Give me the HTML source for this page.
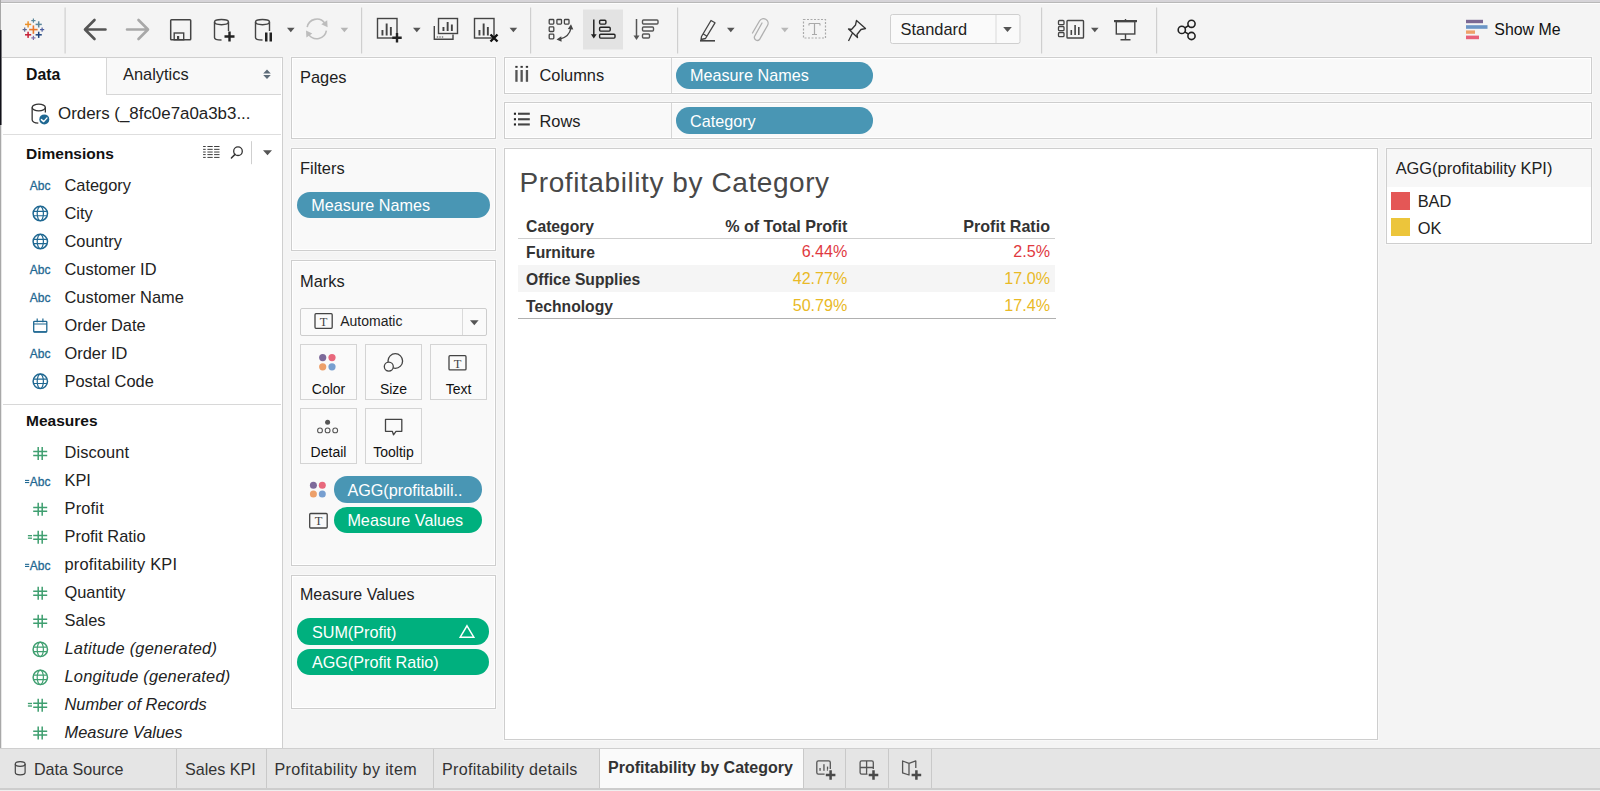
<!DOCTYPE html><html><head><meta charset="utf-8"><style>
html,body{margin:0;padding:0;width:1600px;height:791px;overflow:hidden;background:#f4f4f4;position:relative;font-family:"Liberation Sans",sans-serif}
.t{position:absolute;line-height:1;white-space:nowrap}
.r{position:absolute;display:block}
</style></head><body>
<div class="r" style="left:0px;top:0px;width:1600px;height:2px;background:#d6d4d8"></div>
<div class="r" style="left:0px;top:2px;width:1600px;height:1px;background:#b8b8b8"></div>
<div class="r" style="left:0px;top:3px;width:1600px;height:1px;background:#fdfdfd"></div>
<div class="r" style="left:0px;top:4px;width:1600px;height:53px;background:#f4f4f4"></div>
<div class="r" style="left:0px;top:0px;width:1px;height:791px;background:#a8a8a8"></div>
<div class="r" style="left:1px;top:57px;width:1px;height:691px;background:#e8e8e8"></div>
<div class="r" style="left:0px;top:30px;width:1px;height:95px;background:#101018"></div>
<div class="r" style="left:1px;top:30px;width:1px;height:95px;background:#7a7a7e"></div>
<svg class="r" style="left:0px;top:0px;" width="1600" height="57" viewBox="0 0 1600 57"><rect x="29.2" y="28.8" width="8.4" height="1.6" fill="#e8762b"/><rect x="32.6" y="25.400000000000002" width="1.6" height="8.4" fill="#e8762b"/><rect x="25.0" y="23.65" width="6.2" height="1.5" fill="#eb912b"/><rect x="27.35" y="21.299999999999997" width="1.5" height="6.2" fill="#eb912b"/><rect x="35.6" y="23.65" width="6.2" height="1.5" fill="#5b879b"/><rect x="37.95" y="21.299999999999997" width="1.5" height="6.2" fill="#5b879b"/><rect x="25.0" y="34.05" width="6.2" height="1.5" fill="#c72035"/><rect x="27.35" y="31.699999999999996" width="1.5" height="6.2" fill="#c72035"/><rect x="35.6" y="34.05" width="6.2" height="1.5" fill="#1f447e"/><rect x="37.95" y="31.699999999999996" width="1.5" height="6.2" fill="#1f447e"/><rect x="31.299999999999997" y="20.0" width="4.2" height="1.2" fill="#5b879b"/><rect x="32.8" y="18.5" width="1.2" height="4.2" fill="#5b879b"/><rect x="22.599999999999998" y="29.0" width="4.2" height="1.2" fill="#5c6692"/><rect x="24.099999999999998" y="27.5" width="1.2" height="4.2" fill="#5c6692"/><rect x="40.0" y="29.0" width="4.2" height="1.2" fill="#4e5fa0"/><rect x="41.5" y="27.5" width="1.2" height="4.2" fill="#4e5fa0"/><rect x="31.299999999999997" y="37.3" width="4.2" height="1.2" fill="#7f6fa9"/><rect x="32.8" y="35.8" width="1.2" height="4.2" fill="#7f6fa9"/><rect x="64.5" y="7.5" width="1.2" height="46" fill="#cfcfcf"/><rect x="361.0" y="7.5" width="1.2" height="46" fill="#cfcfcf"/><rect x="530.0" y="7.5" width="1.2" height="46" fill="#cfcfcf"/><rect x="677.0" y="7.5" width="1.2" height="46" fill="#cfcfcf"/><rect x="1041.0" y="7.5" width="1.2" height="46" fill="#cfcfcf"/><rect x="1156.0" y="7.5" width="1.2" height="46" fill="#cfcfcf"/><path d="M105.5 29.5H85.5M94.5 20L85 29.5L94.5 39" fill="none" stroke="#555" stroke-width="2.6" stroke-linecap="round" stroke-linejoin="round"/><path d="M127 29.5H147.5M138.5 20L148 29.5L138.5 39" fill="none" stroke="#a8a8a8" stroke-width="2.6" stroke-linecap="round" stroke-linejoin="round"/><rect x="170.7" y="19.7" width="20" height="20" rx="0.8" fill="none" stroke="#444" stroke-width="1.5"/><rect x="174.2" y="33" width="9.5" height="6.8" fill="none" stroke="#444" stroke-width="1.4"/><rect x="177" y="36" width="2.2" height="3" fill="#444"/><ellipse cx="221.5" cy="22.1" rx="7.0" ry="2.6" fill="none" stroke="#444" stroke-width="1.4"/><path d="M214.5 22.1V37.4A7.0 2.6 0 0 0 221.5 40.0" fill="none" stroke="#444" stroke-width="1.4"/><path d="M228.5 22.1V31.0" fill="none" stroke="#444" stroke-width="1.4"/><path d="M229.5 31.5V41.5M224.5 36.5H234.5" stroke="#222" stroke-width="2.4"/><ellipse cx="262.5" cy="22.1" rx="7.0" ry="2.6" fill="none" stroke="#444" stroke-width="1.4"/><path d="M255.5 22.1V37.4A7.0 2.6 0 0 0 262.5 40.0" fill="none" stroke="#444" stroke-width="1.4"/><path d="M269.5 22.1V31.0" fill="none" stroke="#444" stroke-width="1.4"/><rect x="265" y="32.5" width="2.5" height="9" fill="#222"/><rect x="269.5" y="32.5" width="2.5" height="9" fill="#222"/><path d="M287 27.8H294.6L290.8 32.2Z" fill="#555"/><path d="M340.6 27.8H348.20000000000005L344.40000000000003 32.2Z" fill="#b5b5b5"/><path d="M307.2 27.2A9.8 9.8 0 0 1 324.8 23.2M326.4 30.6A9.8 9.8 0 0 1 308.8 34.6" fill="none" stroke="#bdbdbd" stroke-width="1.6"/><path d="M321.3 24.2L327.6 27.2L327.2 20.2Z M312.3 33.6L306 30.6L306.4 37.6Z" fill="#bdbdbd"/><rect x="377.5" y="18.5" width="19.5" height="19.5" fill="none" stroke="#444" stroke-width="1.4"/><rect x="381.5" y="30.0" width="1.9" height="5.5" fill="#444"/><rect x="385.7" y="23.5" width="1.9" height="12" fill="#444"/><rect x="389.9" y="27.0" width="1.9" height="8.5" fill="#444"/><path d="M397 33V42.5M392.3 37.7H401.7" stroke="#222" stroke-width="2.4"/><path d="M413 27.8H420.6L416.8 32.2Z" fill="#555"/><rect x="438.5" y="18.5" width="19" height="15" fill="none" stroke="#444" stroke-width="1.4"/><rect x="442.5" y="27" width="1.9" height="4" fill="#444"/><rect x="446.7" y="22" width="1.9" height="9" fill="#444"/><rect x="450.9" y="24.5" width="1.9" height="6.5" fill="#444"/><path d="M434.3 26V39.3H453V34.5" fill="none" stroke="#444" stroke-width="1.4"/><path d="M437.5 36.5V37.5M440 36.5V37.5M442.5 36.5V37.5" stroke="#444" stroke-width="1.4"/><rect x="474.5" y="18.5" width="19.5" height="19.5" fill="none" stroke="#444" stroke-width="1.4"/><rect x="478.5" y="30.0" width="1.9" height="5.5" fill="#444"/><rect x="482.7" y="23.5" width="1.9" height="12" fill="#444"/><rect x="486.9" y="27.0" width="1.9" height="8.5" fill="#444"/><path d="M490.5 34.5L497.5 41.5M497.5 34.5L490.5 41.5" stroke="#111" stroke-width="2.4"/><path d="M509.6 27.8H517.2L513.4 32.2Z" fill="#555"/><rect x="549.2" y="19.5" width="4.6" height="4.6" rx="0.8" fill="none" stroke="#444" stroke-width="1.3"/><rect x="556.9" y="19.5" width="4.6" height="4.6" rx="0.8" fill="none" stroke="#444" stroke-width="1.3"/><rect x="564.4" y="19.5" width="4.6" height="4.6" rx="0.8" fill="none" stroke="#444" stroke-width="1.3"/><rect x="549.2" y="26.9" width="4.6" height="4.6" rx="0.8" fill="none" stroke="#444" stroke-width="1.3"/><rect x="549.2" y="34.2" width="4.6" height="4.6" rx="0.8" fill="none" stroke="#444" stroke-width="1.3"/><path d="M570.8 28.5Q569.5 36.5 559.8 39.2" fill="none" stroke="#444" stroke-width="1.4"/><path d="M567.8 29L571 24.2L573.3 29.5Z M561.3 36.2L556.5 39.4L561.6 41.8Z" fill="#444"/><rect x="583" y="9.5" width="40" height="40" fill="#e3e3e3"/><path d="M593.8 19.5V36.5" stroke="#222" stroke-width="1.5"/><path d="M590.9 34.2L593.8 38.6L596.7 34.2Z" fill="#222"/><rect x="599.6" y="20.2" width="6.3" height="3.9" rx="1" fill="none" stroke="#222" stroke-width="1.4"/><rect x="599.6" y="27.2" width="10.6" height="3.9" rx="1" fill="none" stroke="#222" stroke-width="1.4"/><rect x="599.6" y="34.2" width="15.4" height="3.9" rx="1" fill="none" stroke="#222" stroke-width="1.4"/><path d="M636.5 19V38" stroke="#555" stroke-width="1.5"/><path d="M633.5 35.5L636.5 40L639.5 35.5Z" fill="#555"/><rect x="642.5" y="20" width="15.5" height="4" rx="1" fill="none" stroke="#555" stroke-width="1.4"/><rect x="642.5" y="27" width="11" height="4" rx="1" fill="none" stroke="#555" stroke-width="1.4"/><rect x="642.5" y="34" width="7" height="4" rx="1" fill="none" stroke="#555" stroke-width="1.4"/><path d="M701.5 36.5L711 20.5L715 22.8L705.5 38.5L701 39.5Z M703 33.8L707 36.2" fill="none" stroke="#444" stroke-width="1.3" stroke-linejoin="round"/><rect x="700" y="40" width="15" height="1.6" fill="#444"/><path d="M727 27.8H734.6L730.8 32.2Z" fill="#555"/><path d="M762 23L754.5 36.5A3 3 0 0 0 759.5 39.5L767.5 25.5A4.5 4.5 0 0 0 759.5 21L752.5 33" fill="none" stroke="#b0b0b0" stroke-width="1.3" stroke-linecap="round"/><path d="M781 27.8H788.6L784.8 32.2Z" fill="#b8b8b8"/><rect x="803.5" y="19.5" width="22" height="18.5" fill="none" stroke="#aaa" stroke-width="1.2" stroke-dasharray="2 1.5"/><path d="M809 23.5H820M814.5 23.5V34.5M812 34.5H817M809 23.5V25.5M820 23.5V25.5" fill="none" stroke="#aaa" stroke-width="1.2"/><path d="M856.5 20.5L865.5 28.5L861 29.5L857 34.5L857.5 37.5L848.5 29L851.5 29.5L855.5 25Z M852.5 33L848.5 41" fill="none" stroke="#333" stroke-width="1.3" stroke-linejoin="round"/><rect x="890.5" y="14.5" width="129.5" height="29" rx="2" fill="#fafafa" stroke="#cfcfcf" stroke-width="1"/><rect x="995.5" y="15" width="1" height="28" fill="#dadada"/><path d="M1003.2 27H1011.8L1007.5 32Z" fill="#555"/><rect x="1058.5" y="20.5" width="5.5" height="4.2" rx="1" fill="none" stroke="#444" stroke-width="1.3"/><rect x="1058.5" y="26.5" width="5.5" height="4.2" rx="1" fill="none" stroke="#444" stroke-width="1.3"/><rect x="1058.5" y="32.5" width="5.5" height="4.2" rx="1" fill="none" stroke="#444" stroke-width="1.3"/><rect x="1067" y="20.5" width="16.5" height="17.5" rx="0.8" fill="none" stroke="#444" stroke-width="1.4"/><rect x="1070.5" y="30" width="1.6" height="5" fill="#444"/><rect x="1074.3" y="25" width="1.6" height="10" fill="#444"/><rect x="1078" y="27" width="1.6" height="8" fill="#444"/><path d="M1091 27.8H1098.6L1094.8 32.2Z" fill="#555"/><rect x="1114" y="20" width="23" height="2.2" fill="#444"/><rect x="1116.3" y="21.5" width="18.5" height="12.5" fill="none" stroke="#444" stroke-width="1.4"/><path d="M1125.5 19V21M1125.5 34V39.5M1120.5 39.8H1130.5" stroke="#444" stroke-width="1.4"/><circle cx="1191.5" cy="23.8" r="3.6" fill="none" stroke="#222" stroke-width="1.6"/><circle cx="1191.5" cy="36" r="3.6" fill="none" stroke="#222" stroke-width="1.6"/><circle cx="1181.8" cy="29.9" r="3.6" fill="none" stroke="#222" stroke-width="1.6"/><path d="M1184.8 28L1188.5 25.6M1184.8 31.8L1188.5 34.2" stroke="#222" stroke-width="1.6"/><rect x="1466" y="19.8" width="17" height="3.4" fill="#7b6893"/><rect x="1466" y="25.2" width="21.5" height="3.6" fill="#6a95c6"/><rect x="1466" y="30.4" width="9" height="3.4" fill="#eea06a"/><rect x="1466" y="35.6" width="13" height="3.6" fill="#e8607a"/></svg>
<div class="t" style="left:900.6px;top:21.12px;font-size:16.4px;font-weight:normal;color:#222;font-style:normal;">Standard</div>
<div class="t" style="left:1494.3px;top:22.04px;font-size:15.9px;font-weight:normal;color:#111;font-style:normal;">Show Me</div>
<div class="r" style="left:2px;top:57px;width:281px;height:691px;background:#fff;border-top:1px solid #cfcfcf;border-right:1px solid #cfcfcf;box-sizing:border-box"></div>
<div class="r" style="left:106px;top:58px;width:175px;height:36px;background:#f9f9f9;border-left:1px solid #d6d6d6;border-bottom:1px solid #d6d6d6;box-sizing:border-box;height:37px"></div>
<div class="t" style="left:26px;top:66.93px;font-size:15.8px;font-weight:bold;color:#111;font-style:normal;">Data</div>
<div class="t" style="left:123px;top:66.32px;font-size:16.4px;font-weight:normal;color:#222;font-style:normal;">Analytics</div>
<div class="t" style="left:58px;top:105.69px;font-size:16.9px;font-weight:normal;color:#222;font-style:normal;">Orders (_8fc0e7a0a3b3...</div>
<div class="r" style="left:3px;top:134px;width:278px;height:1px;background:#dedede"></div>
<div class="t" style="left:26px;top:145.68px;font-size:15.5px;font-weight:bold;color:#111;font-style:normal;">Dimensions</div>
<div class="r" style="left:3px;top:404px;width:278px;height:1px;background:#d8d8d8"></div>
<div class="t" style="left:26px;top:412.98px;font-size:15.5px;font-weight:bold;color:#111;font-style:normal;">Measures</div>
<div class="t" style="left:64.5px;top:177.02px;font-size:16.4px;font-weight:normal;color:#222;font-style:normal;">Category</div>
<div class="t" style="left:64.5px;top:204.98px;font-size:16.4px;font-weight:normal;color:#222;font-style:normal;">City</div>
<div class="t" style="left:64.5px;top:232.94px;font-size:16.4px;font-weight:normal;color:#222;font-style:normal;">Country</div>
<div class="t" style="left:64.5px;top:260.90px;font-size:16.4px;font-weight:normal;color:#222;font-style:normal;">Customer ID</div>
<div class="t" style="left:64.5px;top:288.86px;font-size:16.4px;font-weight:normal;color:#222;font-style:normal;">Customer Name</div>
<div class="t" style="left:64.5px;top:316.82px;font-size:16.4px;font-weight:normal;color:#222;font-style:normal;">Order Date</div>
<div class="t" style="left:64.5px;top:344.78px;font-size:16.4px;font-weight:normal;color:#222;font-style:normal;">Order ID</div>
<div class="t" style="left:64.5px;top:372.74px;font-size:16.4px;font-weight:normal;color:#222;font-style:normal;">Postal Code</div>
<div class="t" style="left:64.5px;top:443.82px;font-size:16.4px;font-weight:normal;color:#222;font-style:normal;letter-spacing:0.1px">Discount</div>
<div class="t" style="left:64.5px;top:471.79px;font-size:16.4px;font-weight:normal;color:#222;font-style:normal;letter-spacing:0px">KPI</div>
<div class="t" style="left:64.5px;top:499.76px;font-size:16.4px;font-weight:normal;color:#222;font-style:normal;letter-spacing:0.2px">Profit</div>
<div class="t" style="left:64.5px;top:527.73px;font-size:16.4px;font-weight:normal;color:#222;font-style:normal;letter-spacing:0px">Profit Ratio</div>
<div class="t" style="left:64.5px;top:555.70px;font-size:16.4px;font-weight:normal;color:#222;font-style:normal;letter-spacing:0.2px">profitability KPI</div>
<div class="t" style="left:64.5px;top:583.67px;font-size:16.4px;font-weight:normal;color:#222;font-style:normal;letter-spacing:0px">Quantity</div>
<div class="t" style="left:64.5px;top:611.64px;font-size:16.4px;font-weight:normal;color:#222;font-style:normal;letter-spacing:0px">Sales</div>
<div class="t" style="left:64.5px;top:639.61px;font-size:16.4px;font-weight:normal;color:#222;font-style:italic;letter-spacing:0.25px">Latitude (generated)</div>
<div class="t" style="left:64.5px;top:667.58px;font-size:16.4px;font-weight:normal;color:#222;font-style:italic;letter-spacing:0.22px">Longitude (generated)</div>
<div class="t" style="left:64.5px;top:695.55px;font-size:16.4px;font-weight:normal;color:#222;font-style:italic;letter-spacing:0px">Number of Records</div>
<div class="t" style="left:64.5px;top:723.52px;font-size:16.4px;font-weight:normal;color:#222;font-style:italic;letter-spacing:0px">Measure Values</div>
<svg class="r" style="left:0px;top:0px;" width="282" height="748" viewBox="0 0 282 748"><path d="M263.2 73.4L267 69.4L270.8 73.4Z M263.2 75L267 79L270.8 75Z" fill="#5d6b78"/><ellipse cx="38.75" cy="107.5" rx="6.6" ry="3.3" fill="none" stroke="#333" stroke-width="1.3"/><path d="M32.15 107.5V119.8Q32.2 122.8 38.3 123.2" fill="none" stroke="#333" stroke-width="1.3"/><path d="M45.35 107.5V112.5" fill="none" stroke="#333" stroke-width="1.3"/><circle cx="44.3" cy="119.4" r="5" fill="#1f6892"/><path d="M41.4 119.6L43.7 121.6L47 117.9" fill="none" stroke="#fff" stroke-width="1.4" stroke-linecap="round" stroke-linejoin="round"/><rect x="203.1" y="146.05" width="2.6" height="0.95" fill="#333"/><rect x="207.4" y="146.05" width="5.3" height="0.95" fill="#333"/><rect x="214.1" y="146.05" width="5.4" height="0.95" fill="#333"/><rect x="203.1" y="148.85000000000002" width="2.6" height="0.95" fill="#333"/><rect x="207.4" y="148.85000000000002" width="5.3" height="0.95" fill="#333"/><rect x="214.1" y="148.85000000000002" width="5.4" height="0.95" fill="#333"/><rect x="203.1" y="151.55" width="2.6" height="0.95" fill="#333"/><rect x="207.4" y="151.55" width="5.3" height="0.95" fill="#333"/><rect x="214.1" y="151.55" width="5.4" height="0.95" fill="#333"/><rect x="203.1" y="154.15" width="2.6" height="0.95" fill="#333"/><rect x="207.4" y="154.15" width="5.3" height="0.95" fill="#333"/><rect x="214.1" y="154.15" width="5.4" height="0.95" fill="#333"/><rect x="203.1" y="156.9" width="2.6" height="0.95" fill="#333"/><rect x="207.4" y="156.9" width="5.3" height="0.95" fill="#333"/><rect x="214.1" y="156.9" width="5.4" height="0.95" fill="#333"/><circle cx="238" cy="151.2" r="4.3" fill="none" stroke="#333" stroke-width="1.3"/><path d="M235 154.4L231.4 158" stroke="#333" stroke-width="1.5" stroke-linecap="round"/><rect x="251" y="141.2" width="1" height="23" fill="#cfcfcf"/><path d="M263 150.2H272L267.5 155.2Z" fill="#555"/><text x="29.8" y="189.9" font-family="Liberation Sans" font-size="12" fill="#1f6892" stroke="#1f6892" stroke-width="0.3">Abc</text><circle cx="40.3" cy="213.56" r="7.2" fill="none" stroke="#1f6892" stroke-width="1.5"/><ellipse cx="40.3" cy="213.56" rx="3.1" ry="7.2" fill="none" stroke="#1f6892" stroke-width="1.2"/><path d="M33.699999999999996 211.36H46.9M33.699999999999996 215.76H46.9" stroke="#1f6892" stroke-width="1.2"/><circle cx="40.3" cy="241.51999999999998" r="7.2" fill="none" stroke="#1f6892" stroke-width="1.5"/><ellipse cx="40.3" cy="241.51999999999998" rx="3.1" ry="7.2" fill="none" stroke="#1f6892" stroke-width="1.2"/><path d="M33.699999999999996 239.32H46.9M33.699999999999996 243.71999999999997H46.9" stroke="#1f6892" stroke-width="1.2"/><text x="29.8" y="273.78" font-family="Liberation Sans" font-size="12" fill="#1f6892" stroke="#1f6892" stroke-width="0.3">Abc</text><text x="29.8" y="301.74" font-family="Liberation Sans" font-size="12" fill="#1f6892" stroke="#1f6892" stroke-width="0.3">Abc</text><rect x="33.7" y="321.3" width="13.1" height="10.7" rx="0.8" fill="none" stroke="#1f6892" stroke-width="1.3"/><path d="M33.7 324.00000000000006H46.8M37.2 318.40000000000003V322.20000000000005M42.9 318.40000000000003V322.20000000000005" stroke="#1f6892" stroke-width="1.2"/><rect x="33.7" y="331.20000000000005" width="13.1" height="1.2" fill="#1f6892"/><text x="29.8" y="357.65999999999997" font-family="Liberation Sans" font-size="12" fill="#1f6892" stroke="#1f6892" stroke-width="0.3">Abc</text><circle cx="40.3" cy="381.32" r="7.2" fill="none" stroke="#1f6892" stroke-width="1.5"/><ellipse cx="40.3" cy="381.32" rx="3.1" ry="7.2" fill="none" stroke="#1f6892" stroke-width="1.2"/><path d="M33.699999999999996 379.12H46.9M33.699999999999996 383.52H46.9" stroke="#1f6892" stroke-width="1.2"/><path d="M38.2 446.9V459.9M42.2 446.9V459.9M33.2 451.5H47.2M33.2 455.4H47.2" stroke="#3f9f70" stroke-width="1.5"/><text x="29.8" y="485.96999999999997" font-family="Liberation Sans" font-size="12" fill="#1f6892" stroke="#1f6892" stroke-width="0.3">Abc</text><rect x="25" y="479.86999999999995" width="4.2" height="1.1" fill="#1f6892"/><rect x="25" y="481.96999999999997" width="4.2" height="1.1" fill="#1f6892"/><path d="M38.2 502.84V515.8399999999999M42.2 502.84V515.8399999999999M33.2 507.44H47.2M33.2 511.34H47.2" stroke="#3f9f70" stroke-width="1.5"/><path d="M38.2 530.8100000000001V543.8100000000001M42.2 530.8100000000001V543.8100000000001M33.2 535.4100000000001H47.2M33.2 539.3100000000001H47.2" stroke="#3f9f70" stroke-width="1.5"/><rect x="27.9" y="535.01" width="4.1" height="1.35" fill="#3f9f70"/><rect x="27.9" y="537.51" width="4.1" height="1.35" fill="#3f9f70"/><text x="29.8" y="569.8799999999999" font-family="Liberation Sans" font-size="12" fill="#1f6892" stroke="#1f6892" stroke-width="0.3">Abc</text><rect x="25" y="563.78" width="4.2" height="1.1" fill="#1f6892"/><rect x="25" y="565.88" width="4.2" height="1.1" fill="#1f6892"/><path d="M38.2 586.75V599.75M42.2 586.75V599.75M33.2 591.35H47.2M33.2 595.25H47.2" stroke="#3f9f70" stroke-width="1.5"/><path d="M38.2 614.72V627.72M42.2 614.72V627.72M33.2 619.32H47.2M33.2 623.22H47.2" stroke="#3f9f70" stroke-width="1.5"/><circle cx="40.3" cy="649.39" r="7.2" fill="none" stroke="#3f9f70" stroke-width="1.5"/><ellipse cx="40.3" cy="649.39" rx="3.1" ry="7.2" fill="none" stroke="#3f9f70" stroke-width="1.2"/><path d="M33.699999999999996 647.1899999999999H46.9M33.699999999999996 651.59H46.9" stroke="#3f9f70" stroke-width="1.2"/><circle cx="40.3" cy="677.36" r="7.2" fill="none" stroke="#3f9f70" stroke-width="1.5"/><ellipse cx="40.3" cy="677.36" rx="3.1" ry="7.2" fill="none" stroke="#3f9f70" stroke-width="1.2"/><path d="M33.699999999999996 675.16H46.9M33.699999999999996 679.5600000000001H46.9" stroke="#3f9f70" stroke-width="1.2"/><path d="M38.2 698.63V711.63M42.2 698.63V711.63M33.2 703.23H47.2M33.2 707.13H47.2" stroke="#3f9f70" stroke-width="1.5"/><rect x="27.9" y="702.8299999999999" width="4.1" height="1.35" fill="#3f9f70"/><rect x="27.9" y="705.3299999999999" width="4.1" height="1.35" fill="#3f9f70"/><path d="M38.2 726.6V739.6M42.2 726.6V739.6M33.2 731.2H47.2M33.2 735.1H47.2" stroke="#3f9f70" stroke-width="1.5"/></svg>
<div class="r" style="left:291px;top:57px;width:205px;height:82px;background:#f9f9f9;border:1px solid #cecece;box-sizing:border-box;box-shadow:inset 0 0 0 1px #fff,0 0 0 1px #f8f8f8"></div>
<div class="t" style="left:300px;top:69.32px;font-size:16.4px;font-weight:normal;color:#222;font-style:normal;">Pages</div>
<div class="r" style="left:291px;top:148px;width:205px;height:103px;background:#f9f9f9;border:1px solid #cecece;box-sizing:border-box;box-shadow:inset 0 0 0 1px #fff,0 0 0 1px #f8f8f8"></div>
<div class="t" style="left:300px;top:159.52px;font-size:16.4px;font-weight:normal;color:#222;font-style:normal;">Filters</div>
<div class="r" style="left:291px;top:260px;width:205px;height:306px;background:#f9f9f9;border:1px solid #cecece;box-sizing:border-box;box-shadow:inset 0 0 0 1px #fff,0 0 0 1px #f8f8f8"></div>
<div class="t" style="left:300px;top:272.52px;font-size:16.4px;font-weight:normal;color:#222;font-style:normal;">Marks</div>
<div class="r" style="left:291px;top:575px;width:205px;height:134px;background:#f9f9f9;border:1px solid #cecece;box-sizing:border-box;box-shadow:inset 0 0 0 1px #fff,0 0 0 1px #f8f8f8"></div>
<div class="t" style="left:300px;top:587.06px;font-size:16.0px;font-weight:normal;color:#222;font-style:normal;">Measure Values</div>
<div class="r" style="left:504px;top:57px;width:1088px;height:37px;background:#f9f9f9;border:1px solid #cecece;box-sizing:border-box;box-shadow:inset 0 0 0 1px #fff,0 0 0 1px #f8f8f8"></div>
<div class="r" style="left:671px;top:58px;width:1px;height:35px;background:#d6d6d6"></div>
<div class="t" style="left:539.5px;top:67.42px;font-size:16.4px;font-weight:normal;color:#222;font-style:normal;">Columns</div>
<div class="r" style="left:504px;top:102px;width:1088px;height:37px;background:#f9f9f9;border:1px solid #cecece;box-sizing:border-box;box-shadow:inset 0 0 0 1px #fff,0 0 0 1px #f8f8f8"></div>
<div class="r" style="left:671px;top:103px;width:1px;height:35px;background:#d6d6d6"></div>
<div class="t" style="left:539.5px;top:113.02px;font-size:16.4px;font-weight:normal;color:#222;font-style:normal;">Rows</div>
<svg class="r" style="left:0px;top:0px;" width="600" height="140" viewBox="0 0 600 140"><rect x="515.3" y="65.9" width="2.3" height="1.9" fill="#333"/><rect x="520.5" y="65.9" width="2.3" height="1.9" fill="#333"/><rect x="525.8" y="65.9" width="2.3" height="1.9" fill="#333"/><rect x="515.3" y="70" width="2.3" height="11.8" fill="#555"/><rect x="520.5" y="70" width="2.3" height="11.8" fill="#555"/><rect x="525.8" y="70" width="2.3" height="11.8" fill="#555"/><rect x="513.9" y="112.7" width="2.1" height="2.1" fill="#222"/><rect x="518" y="112.7" width="11.8" height="2.1" fill="#444"/><rect x="513.9" y="118.2" width="2.1" height="2.1" fill="#222"/><rect x="518" y="118.2" width="11.8" height="2.1" fill="#444"/><rect x="513.9" y="123.4" width="2.1" height="2.1" fill="#222"/><rect x="518" y="123.4" width="11.8" height="2.1" fill="#444"/></svg>
<div class="r" style="left:504px;top:148px;width:874px;height:592px;background:#fff;border:1px solid #cecece;box-sizing:border-box;box-shadow:0 0 0 1px #f8f8f8"></div>
<div class="r" style="left:1386px;top:148px;width:206px;height:96px;background:#fff;border:1px solid #cecece;box-sizing:border-box;box-shadow:inset 0 0 0 1px #fff,0 0 0 1px #f8f8f8"></div>
<div class="r" style="left:1387px;top:149px;width:204px;height:38px;background:#f7f7f7"></div>
<div class="t" style="left:1395.7px;top:160.22px;font-size:16.4px;font-weight:normal;color:#222;font-style:normal;">AGG(profitability KPI)</div>
<div class="r" style="left:1391px;top:192px;width:19px;height:18px;background:#e45756"></div>
<div class="r" style="left:1391px;top:218px;width:19px;height:18px;background:#ecc53b"></div>
<div class="t" style="left:1417.7px;top:192.92px;font-size:16.4px;font-weight:normal;color:#222;font-style:normal;">BAD</div>
<div class="t" style="left:1417.7px;top:220.32px;font-size:16.4px;font-weight:normal;color:#222;font-style:normal;">OK</div>
<div class="r" style="left:676px;top:62px;width:197px;height:26.5px;background:#4996b4;border-radius:13.25px"></div>
<div class="t" style="left:690px;top:67.44px;font-size:16.2px;font-weight:normal;color:#fff;font-style:normal;">Measure Names</div>
<div class="r" style="left:676px;top:107.2px;width:197px;height:26.5px;background:#4996b4;border-radius:13.25px"></div>
<div class="t" style="left:690px;top:112.64px;font-size:16.2px;font-weight:normal;color:#fff;font-style:normal;">Category</div>
<div class="r" style="left:297px;top:191.5px;width:193px;height:26.5px;background:#4996b4;border-radius:13.25px"></div>
<div class="t" style="left:311.3px;top:196.94px;font-size:16.2px;font-weight:normal;color:#fff;font-style:normal;">Measure Names</div>
<div class="r" style="left:333.5px;top:476.4px;width:148px;height:26.3px;background:#4996b4;border-radius:13.15px"></div>
<div class="t" style="left:347.4px;top:481.74px;font-size:16.2px;font-weight:normal;color:#fff;font-style:normal;">AGG(profitabili..</div>
<div class="r" style="left:333.5px;top:507px;width:148px;height:26.3px;background:#00b07e;border-radius:13.15px"></div>
<div class="t" style="left:347.4px;top:512.34px;font-size:16.2px;font-weight:normal;color:#fff;font-style:normal;">Measure Values</div>
<div class="r" style="left:297px;top:618.4px;width:192px;height:26.3px;background:#00b07e;border-radius:13.15px"></div>
<div class="t" style="left:311.9px;top:623.74px;font-size:16.2px;font-weight:normal;color:#fff;font-style:normal;">SUM(Profit)</div>
<div class="r" style="left:297px;top:649px;width:192px;height:26.3px;background:#00b07e;border-radius:13.15px"></div>
<div class="t" style="left:311.9px;top:654.34px;font-size:16.2px;font-weight:normal;color:#fff;font-style:normal;">AGG(Profit Ratio)</div>
<div class="r" style="left:300px;top:308px;width:187px;height:28px;background:#fafafa;border:1px solid #cdcdcd;border-radius:2px;box-sizing:border-box"></div>
<div class="r" style="left:462px;top:309px;width:1px;height:26px;background:#dadada"></div>
<div class="t" style="left:340.2px;top:314.35px;font-size:14px;font-weight:normal;color:#222;font-style:normal;">Automatic</div>
<div class="r" style="left:300px;top:344px;width:57px;height:56px;background:#fafafa;border:1px solid #d4d4d4;box-sizing:border-box"></div>
<div class="t" style="left:300px;width:57px;text-align:center;top:381.55px;font-size:14px;color:#111">Color</div>
<div class="r" style="left:365px;top:344px;width:57px;height:56px;background:#fafafa;border:1px solid #d4d4d4;box-sizing:border-box"></div>
<div class="t" style="left:365px;width:57px;text-align:center;top:381.55px;font-size:14px;color:#111">Size</div>
<div class="r" style="left:430px;top:344px;width:57px;height:56px;background:#fafafa;border:1px solid #d4d4d4;box-sizing:border-box"></div>
<div class="t" style="left:430px;width:57px;text-align:center;top:381.55px;font-size:14px;color:#111">Text</div>
<div class="r" style="left:300px;top:408px;width:57px;height:56px;background:#fafafa;border:1px solid #d4d4d4;box-sizing:border-box"></div>
<div class="t" style="left:300px;width:57px;text-align:center;top:445.15px;font-size:14px;color:#111">Detail</div>
<div class="r" style="left:365px;top:408px;width:57px;height:56px;background:#fafafa;border:1px solid #d4d4d4;box-sizing:border-box"></div>
<div class="t" style="left:365px;width:57px;text-align:center;top:445.15px;font-size:14px;color:#111">Tooltip</div>
<svg class="r" style="left:0px;top:0px;z-index:5" width="500" height="748" viewBox="0 0 500 748"><rect x="315" y="313.7" width="17.2" height="14.6" rx="1" fill="none" stroke="#444" stroke-width="1.3"/><text x="323.6" y="325.6" font-family="Liberation Serif" font-size="12.5" fill="#444" text-anchor="middle">T</text><path d="M470 320.2H478.6L474.3 325.2Z" fill="#555"/><circle cx="322.7" cy="357.6" r="3.6" fill="#7d6a9a"/><circle cx="332" cy="357.6" r="3.6" fill="#e8687c"/><circle cx="322.7" cy="366.8" r="3.6" fill="#eda06a"/><circle cx="332" cy="366.8" r="3.6" fill="#779fd0"/><circle cx="395.3" cy="361" r="7.3" fill="none" stroke="#444" stroke-width="1.3"/><circle cx="388.8" cy="366.6" r="4.5" fill="#fafafa" stroke="#444" stroke-width="1.3"/><rect x="449" y="355.7" width="17" height="14.2" rx="1" fill="none" stroke="#444" stroke-width="1.3"/><text x="457.5" y="367.5" font-family="Liberation Serif" font-size="12.5" fill="#444" text-anchor="middle">T</text><circle cx="327.6" cy="422.2" r="2.5" fill="#555"/><circle cx="320" cy="430.4" r="2.4" fill="none" stroke="#555" stroke-width="1.1"/><circle cx="327.6" cy="430.4" r="2.4" fill="none" stroke="#555" stroke-width="1.1"/><circle cx="335.2" cy="430.4" r="2.4" fill="none" stroke="#555" stroke-width="1.1"/><path d="M385.5 419.3H401.8V431.3H396L393.5 434.8L392.3 431.3H385.5Z" fill="none" stroke="#444" stroke-width="1.3" stroke-linejoin="round"/><circle cx="313.4" cy="485.2" r="3.5" fill="#7d6a9a"/><circle cx="322.3" cy="485.2" r="3.5" fill="#e8687c"/><circle cx="313.4" cy="494" r="3.5" fill="#eda06a"/><circle cx="322.3" cy="494" r="3.5" fill="#779fd0"/><rect x="309.7" y="513.5" width="17.5" height="14.5" rx="1" fill="none" stroke="#444" stroke-width="1.3"/><text x="318.5" y="525.3" font-family="Liberation Serif" font-size="12.5" fill="#444" text-anchor="middle">T</text><path d="M467 625.8L473.8 637.2H460.2Z" fill="none" stroke="#fff" stroke-width="1.5" stroke-linejoin="miter"/></svg>
<div class="t" style="left:519.5px;top:168.60px;font-size:28.0px;font-weight:normal;color:#484848;font-style:normal;letter-spacing:0.58px">Profitability by Category</div>
<div class="t" style="left:526.1px;top:219.11px;font-size:15.7px;font-weight:bold;color:#333;font-style:normal;">Category</div>
<div class="t" style="right:752.7px;top:217.77px;font-size:16.1px;font-weight:bold;color:#333;font-style:normal;">% of Total Profit</div>
<div class="t" style="right:550px;top:217.77px;font-size:16.1px;font-weight:bold;color:#333;font-style:normal;">Profit Ratio</div>
<div class="r" style="left:518px;top:237.5px;width:537px;height:1px;background:#cfcfcf"></div>
<div class="r" style="left:518px;top:265px;width:537px;height:26.5px;background:#f5f5f5"></div>
<div class="r" style="left:518px;top:318px;width:538px;height:1px;background:#b0b0b0"></div>
<div class="t" style="left:526.1px;top:245.21px;font-size:15.7px;font-weight:bold;color:#333;font-style:normal;">Furniture</div>
<div class="t" style="right:752.7px;top:243.37px;font-size:16.1px;font-weight:normal;color:#e0393f;font-style:normal;">6.44%</div>
<div class="t" style="right:550px;top:243.37px;font-size:16.1px;font-weight:normal;color:#e0393f;font-style:normal;">2.5%</div>
<div class="t" style="left:526.1px;top:271.71px;font-size:15.7px;font-weight:bold;color:#333;font-style:normal;">Office Supplies</div>
<div class="t" style="right:752.7px;top:269.87px;font-size:16.1px;font-weight:normal;color:#e9b926;font-style:normal;">42.77%</div>
<div class="t" style="right:550px;top:269.87px;font-size:16.1px;font-weight:normal;color:#e9b926;font-style:normal;">17.0%</div>
<div class="t" style="left:526.1px;top:298.91px;font-size:15.7px;font-weight:bold;color:#333;font-style:normal;">Technology</div>
<div class="t" style="right:752.7px;top:297.07px;font-size:16.1px;font-weight:normal;color:#e9b926;font-style:normal;">50.79%</div>
<div class="t" style="right:550px;top:297.07px;font-size:16.1px;font-weight:normal;color:#e9b926;font-style:normal;">17.4%</div>
<div class="r" style="left:0px;top:748px;width:1600px;height:1px;background:#cfcfcf"></div>
<div class="r" style="left:0px;top:749px;width:1600px;height:39px;background:#e5e5e5"></div>
<div class="r" style="left:0px;top:788px;width:1600px;height:1.5px;background:#cdcdcd"></div>
<div class="r" style="left:0px;top:789.5px;width:1600px;height:2px;background:#efefef"></div>
<div class="r" style="left:599px;top:749px;width:205px;height:39px;background:#fafafa"></div>
<div class="r" style="left:175.5px;top:749px;width:1px;height:39px;background:#c9c9c9"></div>
<div class="r" style="left:266px;top:749px;width:1px;height:39px;background:#c9c9c9"></div>
<div class="r" style="left:433px;top:749px;width:1px;height:39px;background:#c9c9c9"></div>
<div class="r" style="left:599px;top:749px;width:1px;height:39px;background:#c9c9c9"></div>
<div class="r" style="left:803px;top:749px;width:1px;height:39px;background:#c9c9c9"></div>
<div class="r" style="left:845px;top:749px;width:1px;height:39px;background:#c9c9c9"></div>
<div class="r" style="left:888px;top:749px;width:1px;height:39px;background:#c9c9c9"></div>
<div class="r" style="left:930.5px;top:749px;width:1px;height:39px;background:#c9c9c9"></div>
<div class="t" style="left:34px;top:760.97px;font-size:16.1px;font-weight:normal;color:#333;font-style:normal;">Data Source</div>
<div class="t" style="left:185px;top:760.97px;font-size:16.1px;font-weight:normal;color:#333;font-style:normal;">Sales KPI</div>
<div class="t" style="left:274.4px;top:760.97px;font-size:16.1px;font-weight:normal;color:#333;font-style:normal;letter-spacing:0.36px">Profitability by item</div>
<div class="t" style="left:442px;top:760.97px;font-size:16.1px;font-weight:normal;color:#333;font-style:normal;letter-spacing:0.28px">Profitability details</div>
<div class="t" style="left:608px;top:760.36px;font-size:16.0px;font-weight:bold;color:#333;font-style:normal;">Profitability by Category</div>
<svg class="r" style="left:0px;top:740px;" width="1000" height="51" viewBox="0 0 1000 51"></svg>
<svg class="r" style="left:0;top:0" width="1000" height="791" viewBox="0 0 1000 791"><ellipse cx="20.2" cy="764" rx="4.9" ry="2.3" fill="none" stroke="#444" stroke-width="1.2"/><path d="M15.3 764V772.5A4.9 2.3 0 0 0 25.1 772.5V764" fill="none" stroke="#444" stroke-width="1.2"/><rect x="816.8" y="760.9" width="13.5" height="13.2" rx="1.6" fill="none" stroke="#555" stroke-width="1.3"/><rect x="819.4" y="768" width="1.3" height="2.8" fill="#555"/><rect x="823.3" y="764.2" width="1.3" height="6.6" fill="#555"/><rect x="826.9" y="766.6" width="1.3" height="4.2" fill="#555"/><path d="M830.6 769V781M824.6 775H836.6" stroke="#e5e5e5" stroke-width="5.6"/><path d="M830.6 770.2V779.8M825.8000000000001 775H835.4" stroke="#4a4a4a" stroke-width="2.5"/><rect x="860.1" y="760.9" width="13.2" height="13.2" rx="1.6" fill="none" stroke="#555" stroke-width="1.3"/><path d="M866.6 761V774M860.1 767.5H873.3" stroke="#555" stroke-width="1.3"/><path d="M873.5 769V781M867.5 775H879.5" stroke="#e5e5e5" stroke-width="5.6"/><path d="M873.5 770.2V779.8M868.7 775H878.3" stroke="#4a4a4a" stroke-width="2.5"/><path d="M902.6 761L909 763.3V775L902.6 772.9Z M909 763.3L915.8 760.9V768" fill="none" stroke="#555" stroke-width="1.3" stroke-linejoin="round"/><path d="M916.4 769V781M910.4 775H922.4" stroke="#e5e5e5" stroke-width="5.6"/><path d="M916.4 770.2V779.8M911.6 775H921.1999999999999" stroke="#4a4a4a" stroke-width="2.5"/></svg>
</body></html>
